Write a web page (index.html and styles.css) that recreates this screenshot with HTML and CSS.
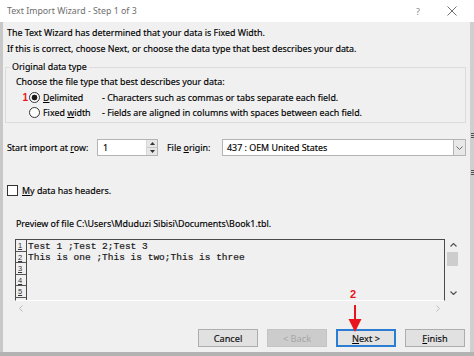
FILE: index.html
```html
<!DOCTYPE html>
<html>
<head>
<meta charset="utf-8">
<title>Text Import Wizard</title>
<link rel="stylesheet" href="styles.css">
</head>
<body>
<div class="window">
  <div class="titlebar">
    <span class="title">Text Import Wizard - Step 1 of 3</span>
    <span class="help">?</span>
    <svg class="close" width="10" height="10" viewBox="0 0 10 10"><path d="M0.5 0.5L9.5 9.5M9.5 0.5L0.5 9.5" stroke="#707070" stroke-width="1" fill="none"/></svg>
  </div>
  <div class="client">
    <p class="intro">The Text Wizard has determined that your data is Fixed Width.</p>
    <p class="intro">If this is correct, choose Next, or choose the data type that best describes your data.</p>
    <fieldset class="group">
      <legend>Original data type</legend>
      <div class="choose">Choose the file type that best describes your data:</div>
      <div class="radio-row">
        <span class="mark">1</span><span class="radio checked"></span><span class="rlabel"><u>D</u>elimited</span><span class="desc">- Characters such as commas or tabs separate each field.</span>
      </div>
      <div class="radio-row">
        <span class="mark"></span><span class="radio"></span><span class="rlabel">Fixed <u>w</u>idth</span><span class="desc">- Fields are aligned in columns with spaces between each field.</span>
      </div>
    </fieldset>
    <div class="import-row">
      <span class="ilabel">Start import at <u>r</u>ow:</span>
      <div class="spin">
        <span class="spin-val">1</span>
        <span class="spin-btns">
          <span class="sb"><svg width="5" height="3" viewBox="0 0 5 3"><path d="M0 3L2.5 0L5 3Z" fill="#333"/></svg></span>
          <span class="sb"><svg width="5" height="3" viewBox="0 0 5 3"><path d="M0 0L2.5 3L5 0Z" fill="#333"/></svg></span>
        </span>
      </div>
      <span class="olabel">File <u>o</u>rigin:</span>
      <div class="select">
        <span class="sel-val">437 : OEM United States</span>
        <span class="sel-btn"><svg width="7" height="4" viewBox="0 0 7 4"><path d="M0.5 0.5L3.5 3.5L6.5 0.5" stroke="#666" stroke-width="1" fill="none"/></svg></span>
      </div>
    </div>
    <div class="chk-row"><span class="chk"></span><span><u>M</u>y data has headers.</span></div>
    <div class="preview-label">Preview of file C:\Users\Mduduzi Sibisi\Documents\Book1.tbl.</div>
    <div class="preview">
      <div class="pbox">
        <div class="nums">
          <span class="num">1</span><span class="num">2</span><span class="num">3</span><span class="num">4</span><span class="num">5</span>
        </div>
        <div class="lines">
          <div class="line">Test 1 ;Test 2;Test 3</div>
          <div class="line">This is one ;This is two;This is three</div>
        </div>
      </div>
      <div class="vscroll">
        <span class="varrow"><svg width="7" height="4" viewBox="0 0 7 4"><path d="M0.5 3.5L3.5 0.5L6.5 3.5" stroke="#555" stroke-width="1.2" fill="none"/></svg></span>
        <span class="thumb"></span>
        <span class="vspace"></span>
        <span class="varrow"><svg width="7" height="4" viewBox="0 0 7 4"><path d="M0.5 0.5L3.5 3.5L6.5 0.5" stroke="#555" stroke-width="1.2" fill="none"/></svg></span>
      </div>
      <div class="hscroll">
        <svg width="4" height="7" viewBox="0 0 4 7"><path d="M3.5 0.5L0.5 3.5L3.5 6.5" stroke="#b8b8b8" stroke-width="1" fill="none"/></svg>
        <svg width="4" height="7" viewBox="0 0 4 7"><path d="M0.5 0.5L3.5 3.5L0.5 6.5" stroke="#c0c0c0" stroke-width="1" fill="none"/></svg>
      </div>
    </div>
    <div class="buttons">
      <span class="btn">Cancel</span>
      <span class="btn disabled">&lt; Back</span>
      <span class="btn default"><u>N</u>ext &gt;</span>
      <span class="btn"><u>F</u>inish</span>
    </div>
  </div>
  <span class="grip grip-a"></span>
  <span class="grip grip-b"></span>
  <span class="anno-num">2</span>
  <svg class="anno-arrow" width="16" height="30" viewBox="0 0 16 30"><path d="M8 0V18" stroke="#e8141b" stroke-width="2"/><path d="M1.5 14L14.5 14L8 27Z" fill="#e8141b"/></svg>
</div>
</body>
</html>
```

FILE: styles.css
```css
* { box-sizing: border-box; }
html, body { margin: 0; padding: 0; }
body {
  width: 474px;
  height: 356px;
  overflow: hidden;
  background: #c4c4c4;
  font-family: "Noto Sans", "Open Sans", sans-serif;
  font-size: 8.9px;
  color: #000;
}
.window {
  position: relative;
  width: 474px;
  height: 356px;
  display: flex;
  flex-direction: column;
  background: linear-gradient(to right, #c8c8c8 0 3px, transparent 3px calc(100% - 4px), #cfcfcf calc(100% - 4px));
  border-bottom: 4px solid #b3b3b3;
}
.titlebar {
  height: 22px;
  flex: none;
  background: #fff;
  display: flex;
  align-items: center;
  padding-left: 7px;
  color: #6e6e6e;
  font-size: 8.8px;
}
.title { flex: 1; }
.help { margin-right: 27px; font-size: 9px; color: #8a8a8a; }
.close { margin-right: 17px; }

.client {
  flex: 1;
  background: #f0f0f0;
  margin: 0 4px 0 3px;
  padding: 3px 4px 0 2px;
  display: flex;
  flex-direction: column;
  -webkit-text-stroke: 0.15px #000;
}
.intro { margin: 0; line-height: 16px; padding-left: 2px; }

.group {
  margin: 3px 0 0 0;
  border: 1px solid #dcdcdc;
  padding: 0 0 2px 10px;
  min-width: 0;
}
.group legend {
  line-height: 14px;
  padding: 0 2px;
  margin-left: -6px;
}
.choose { line-height: 16px; }
.radio-row { display: flex; align-items: center; height: 15px; }
.mark {
  width: 12px;
  text-align: right;
  color: #e8141b;
  -webkit-text-stroke: 0;
  font-family: "Liberation Sans", sans-serif;
  font-weight: bold;
  font-size: 10px;
}
.radio {
  width: 11px;
  height: 11px;
  margin-left: 1px;
  border: 1px solid #333;
  border-radius: 50%;
  background: #fff;
}
.radio.checked { background: radial-gradient(circle, #1a1a1a 0 2.6px, #fff 3.2px); }
.rlabel { margin-left: 3px; width: 59px; }

.import-row {
  display: flex;
  align-items: center;
  height: 17px;
  margin-top: 16px;
  padding-left: 2px;
}
.ilabel { width: 90px; }
.spin {
  width: 61px;
  height: 17px;
  display: flex;
  border: 1px solid #b4b4b4;
  background: #fff;
}
.spin-val { flex: 1; padding-left: 5px; line-height: 15px; }
.spin-btns { width: 11px; display: flex; flex-direction: column; border-left: 1px solid #d8d8d8; }
.sb {
  flex: 1;
  display: flex;
  align-items: center;
  justify-content: center;
  background: #e6e6e6;
}
.sb + .sb { border-top: 1px solid #c8c8c8; }
.olabel { margin-left: 9px; width: 55px; }
.select {
  flex: 1;
  height: 17px;
  display: flex;
  border: 1px solid #b4b4b4;
  background: #fff;
}
.sel-val { flex: 1; padding-left: 4px; line-height: 15px; }
.sel-btn {
  width: 12px;
  display: flex;
  align-items: center;
  justify-content: center;
  background: #e8e8e8;
  border-left: 1px solid #b4b4b4;
}

.chk-row {
  display: flex;
  align-items: center;
  height: 16px;
  margin-top: 26px;
  padding-left: 2px;
}
.chk {
  width: 11px;
  height: 11px;
  border: 1px solid #333;
  background: #fff;
  margin-right: 4px;
}

.preview-label { margin-top: 18px; line-height: 16px; padding-left: 11px; }

.preview {
  margin-top: 7px;
  margin-left: 10px;
  display: grid;
  grid-template-columns: 430px 15px;
  grid-template-rows: 62px 15px;
  -webkit-text-stroke: 0;
}
.pbox {
  display: flex;
  border-top: 1px solid #4a4a4a;
  border-left: 1px solid #4a4a4a;
  border-right: 1px solid #4a4a4a;
  border-bottom: 1px solid #fff;
}
.nums {
  width: 11px;
  display: flex;
  flex-direction: column;
  border-right: 1px solid #4a4a4a;
}
.num {
  height: 11.5px;
  flex: none;
  line-height: 11px;
  font-family: "Liberation Sans", sans-serif;
  font-size: 7.5px;
  color: #333;
  text-decoration: underline;
  padding-left: 2px;
  border-bottom: 1px solid #555;
}
.lines {
  font-family: "Liberation Mono", monospace;
  font-size: 9.5px;
  color: #1a1a1a;
  padding-left: 1px;
  -webkit-text-stroke: 0.2px #1a1a1a;
}
.line { height: 11.5px; line-height: 11.5px; white-space: pre; padding-top: 0.5px; }

.vscroll { display: flex; flex-direction: column; }
.varrow { height: 12px; display: flex; align-items: center; justify-content: center; padding-left: 2px; }
.thumb { height: 14px; width: 11px; margin: 1px 0 0 2px; background: #cdcdcd; }
.vspace { flex: 1; }
.vscroll .varrow:last-child { margin-bottom: 2px; }
.hscroll {
  display: flex;
  align-items: center;
  justify-content: space-between;
  padding: 0 5px 0 4px;
}

.buttons {
  margin-top: 13px;
  margin-right: 1px;
  display: flex;
  justify-content: flex-end;
  gap: 9px;
}
.btn {
  width: 60px;
  height: 18px;
  display: flex;
  align-items: center;
  justify-content: center;
  background: #e1e1e1;
  border: 1px solid #adadad;
  color: #111;
  font-size: 9.2px;
}
.btn.disabled { background: #cccccc; border-color: #c4c4c4; color: #a6a6a6; -webkit-text-stroke: 0; }
.btn.default { border: 2px solid #2b7cd3; background: #e3e3e3; }

.grip {
  position: absolute;
  right: 0;
  width: 3px;
  height: 5px;
  background: repeating-linear-gradient(#505050 0 1px, transparent 1px 2px);
}
.grip-a { top: 133px; }
.grip-b { top: 170px; }

.anno-num {
  position: absolute;
  left: 350px;
  top: 288px;
  color: #e8141b;
  font-family: "Liberation Sans", sans-serif;
  font-weight: bold;
  font-size: 11px;
  line-height: 13px;
}
.anno-arrow { position: absolute; left: 347px; top: 305px; }
```
